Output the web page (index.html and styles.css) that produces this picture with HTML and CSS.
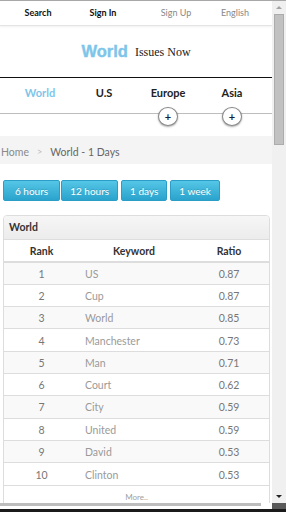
FILE: index.html
```html
<!DOCTYPE html>
<html lang="en">
<head>
    <meta charset="UTF-8">
    <meta name="viewport" content="width=device-width, initial-scale=1.0">
    <title>World Issues Now</title>
    <link rel="stylesheet" href="styles.css">
</head>
<body>
    <div class="window">
        <div class="frame">
            <div class="page">
                <!-- Top links -->
                <div class="topnav">
                    <a class="topnav-item strong">Search</a>
                    <a class="topnav-item strong">Sign In</a>
                    <a class="topnav-item">Sign Up</a>
                    <a class="topnav-item">English</a>
                </div>

                <!-- Logo -->
                <div class="logo">
                    <span class="logo-world">World</span>
                    <span class="logo-sub">Issues Now</span>
                </div>

                <!-- Region tabs -->
                <div class="tabs">
                    <div class="tab active">World</div>
                    <div class="tab">U.S</div>
                    <div class="tab">Europe<span class="tab-toggle">+</span></div>
                    <div class="tab">Asia<span class="tab-toggle">+</span></div>
                </div>

                <div class="breadcrumb">
                    <span class="crumb-home">Home</span>
                    <span class="crumb-sep">&gt;</span>
                    <span class="crumb-current">World - 1 Days</span>
                </div>

                <div class="periods">
                    <button class="period-btn">6 hours</button>
                    <button class="period-btn">12 hours</button>
                    <button class="period-btn">1 days</button>
                    <button class="period-btn">1 week</button>
                </div>

                <div class="panel">
                    <div class="panel-heading">World</div>
                    <table class="rank-table">
                        <thead>
                            <tr><th class="col-rank">Rank</th><th class="col-keyword">Keyword</th><th class="col-ratio">Ratio</th></tr>
                        </thead>
                        <tbody>
                            <tr><td class="col-rank">1</td><td class="col-keyword">US</td><td class="col-ratio">0.87</td></tr>
                            <tr><td class="col-rank">2</td><td class="col-keyword">Cup</td><td class="col-ratio">0.87</td></tr>
                            <tr><td class="col-rank">3</td><td class="col-keyword">World</td><td class="col-ratio">0.85</td></tr>
                            <tr><td class="col-rank">4</td><td class="col-keyword">Manchester</td><td class="col-ratio">0.73</td></tr>
                            <tr><td class="col-rank">5</td><td class="col-keyword">Man</td><td class="col-ratio">0.71</td></tr>
                            <tr><td class="col-rank">6</td><td class="col-keyword">Court</td><td class="col-ratio">0.62</td></tr>
                            <tr><td class="col-rank">7</td><td class="col-keyword">City</td><td class="col-ratio">0.59</td></tr>
                            <tr><td class="col-rank">8</td><td class="col-keyword">United</td><td class="col-ratio">0.59</td></tr>
                            <tr><td class="col-rank">9</td><td class="col-keyword">David</td><td class="col-ratio">0.53</td></tr>
                            <tr><td class="col-rank">10</td><td class="col-keyword">Clinton</td><td class="col-ratio">0.53</td></tr>
                        </tbody>
                    </table>
                    <div class="more">More..</div>
                </div>
            </div>

            <!-- Fake vertical scrollbar -->
            <div class="vscroll">
                <span class="arrow-up"></span>
                <div class="vscroll-thumb"></div>
                <div class="vscroll-rest"></div>
                <span class="arrow-down"></span>
            </div>
        </div>

        <div class="hbar">
            <div class="hbar-track"><div class="hbar-thumb"></div></div>
            <div class="hbar-corner"></div>
        </div>
        <div class="bottom-edge"></div>
    </div>
</body>
</html>
```

FILE: styles.css
```css
:root {
    --accent: #7ec5ea;
    --btn-top: #4dc0e2;
    --btn-bottom: #2aa3cd;
    --border: #dddddd;
    --text-dark: #333;
    --text-muted: #999;
}

* {
    box-sizing: border-box;
    margin: 0;
    padding: 0;
}

body {
    font-family: 'Lato', 'Open Sans', sans-serif;
    color: var(--text-dark);
    background: #fff;
    width: 286px;
    height: 512px;
    overflow: hidden;
}

.window {
    display: flex;
    flex-direction: column;
    height: 512px;
    border-top: 1px solid #a8a8a8;
}

.frame {
    display: flex;
    flex: 1;
    min-height: 0;
}

.page {
    width: 272px;
    flex-shrink: 0;
    overflow: hidden;
}

/* top links */
.topnav {
    display: flex;
    height: 25px;
    align-items: center;
    padding-left: 13px;
    padding-bottom: 1px;
    border-bottom: 1px solid #e4e4e4;
    box-shadow: 0 1px 2px rgba(0,0,0,0.06);
    font-size: 9px;
}

.topnav-item {
    width: 50px;
    text-align: center;
    color: #888;
    white-space: nowrap;
}

.topnav-item:nth-child(2) { margin-left: 15px; }
.topnav-item:nth-child(3) { margin-left: 23px; }
.topnav-item:nth-child(4) { margin-left: 9px; }

.topnav-item.strong {
    color: #111;
    font-weight: bold;
}

/* logo */
.logo {
    height: 52px;
    display: flex;
    align-items: center;
    justify-content: center;
    gap: 7px;
    border-bottom: 1px solid #111;
}

.logo-world {
    font-family: 'Liberation Sans', sans-serif;
    font-weight: bold;
    font-size: 16.5px;
    color: var(--accent);
    -webkit-text-stroke: 0.4px var(--accent);
}

.logo-sub {
    font-family: 'Liberation Serif', serif;
    font-size: 12px;
    color: #222;
    padding-top: 2px;
}

/* region tabs */
.tabs {
    display: flex;
    height: 36px;
    padding-left: 8px;
    border-bottom: 1px solid #bdbdbd;
}

.tab {
    position: relative;
    width: 64px;
    text-align: center;
    font-size: 11px;
    font-weight: bold;
    color: #222;
    padding-top: 8px;
}

.tab.active {
    color: var(--accent);
}

.tab-toggle {
    position: absolute;
    left: 22px;
    bottom: -13px;
    width: 20px;
    height: 19px;
    border: 1px solid #888;
    border-radius: 50%;
    background: #fff;
    box-shadow: 0 1px 2px rgba(0,0,0,0.35);
    font-size: 11px;
    line-height: 17px;
    color: #1a1a3a;
}

.breadcrumb {
    margin-top: 22px;
    height: 28px;
    padding: 3px 0 0 1px;
    display: flex;
    align-items: center;
    gap: 8px;
    background: #f4f4f4;
    font-size: 10.5px;
}

.crumb-home { color: #8a8a8a; }
.crumb-sep { color: #bbb; font-size: 9px; }
.crumb-current { color: #666; }

/* period buttons */
.periods {
    display: flex;
    gap: 3px;
    padding: 16px 0 0 3px;
}

.period-btn {
    height: 21px;
    padding: 0 8px;
    font-family: inherit;
    font-size: 10px;
    color: #fff;
    background: linear-gradient(#55c6e6, var(--btn-bottom));
    border: 1px solid #2b9ec7;
    border-radius: 2px;
    text-shadow: 0 -1px 0 rgba(0,0,0,0.15);
}

.period-btn:first-child {
    padding: 0 11px;
    margin-right: -2px;
}

/* ranking panel */
.panel {
    margin: 14px 2px 0 3px;
    border: 1px solid var(--border);
    border-radius: 4px;
    overflow: hidden;
}

.panel-heading {
    height: 24px;
    line-height: 23px;
    padding-left: 5px;
    font-size: 10.5px;
    font-weight: bold;
    color: #333;
    background: linear-gradient(#f6f6f6, #ececec);
    border-bottom: 1px solid var(--border);
}

.rank-table {
    width: 100%;
    border-collapse: collapse;
    font-size: 10.5px;
}

.rank-table th {
    height: 22px;
    font-weight: bold;
    color: #333;
    border-bottom: 2px solid var(--border);
    text-align: center;
}

.rank-table td {
    height: 22.3px;
    padding-top: 1px;
    border-top: 1px solid var(--border);
    color: #777;
}

.rank-table tbody tr:nth-child(odd) {
    background: #f9f9f9;
}

.rank-table tbody tr:first-child td {
    border-top: none;
}

.col-rank {
    width: 75px;
    text-align: center;
}

.rank-table td.col-keyword {
    padding-left: 6px;
    color: #9a9a9a;
}

.col-ratio {
    width: 80px;
    text-align: center;
}

.more {
    height: 24px;
    border-top: 1px solid var(--border);
    text-align: center;
    font-size: 8px;
    line-height: 22px;
    color: #a0a0a0;
}

/* fake browser scrollbars */
.vscroll {
    width: 14px;
    background: #f0f0f0;
    display: flex;
    flex-direction: column;
    align-items: center;
}

.arrow-up {
    margin: 5px 0 5px;
    border-left: 3px solid transparent;
    border-right: 3px solid transparent;
    border-bottom: 3px solid #a3a3a3;
}

.vscroll-thumb {
    width: 10px;
    height: 131px;
    background: #c1c1c1;
    border: 1px solid #acacac;
}

.vscroll-rest {
    flex: 1;
}

.arrow-down {
    margin: 0 0 5px;
    border-left: 3px solid transparent;
    border-right: 3px solid transparent;
    border-top: 3px solid #222;
}

.hbar {
    display: flex;
    height: 6px;
}

.hbar-track {
    flex: 1;
    background: #fff;
}

.hbar-thumb {
    width: 261px;
    height: 3px;
    background: #bdbdbd;
}

.hbar-corner {
    width: 14px;
    background: #5a5a5a;
}

.bottom-edge {
    height: 3px;
    background: #1a1a1a;
}
```
